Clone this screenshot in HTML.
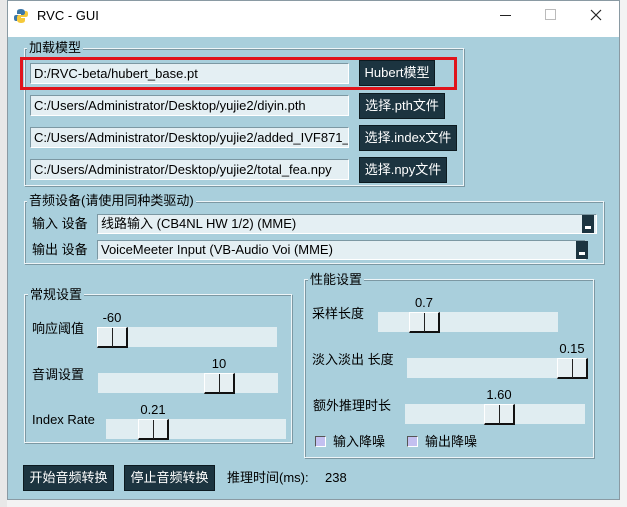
<!DOCTYPE html>
<html><head><meta charset="utf-8"><style>
*{margin:0;padding:0;box-sizing:border-box}
body{width:627px;height:507px;background:#f3f3f3;position:relative;overflow:hidden;font-family:"Liberation Sans","Noto Sans CJK SC",sans-serif;font-size:13px;line-height:16px;color:#000}
.a{position:absolute}
.win{left:7px;top:0;width:613px;height:500px;background:#a9cfdc;border:1px solid #8a9aa3}
.title{left:8px;top:1px;width:611px;height:36px;background:#fff}
.frame{border:1px solid #eef5f8;box-shadow:inset 1px 1px 0 #7c98a3,1px 1px 0 #7c98a3}
.lbl{background:#a9cfdc;padding:0 2px;line-height:14px;font-size:13px}
.entry{background:#e4eff3;border-top:1px solid #7c98a3;border-left:1px solid #7c98a3;border-bottom:1px solid #fff;border-right:1px solid #fff;padding-left:3px;line-height:19px;font-size:13px;white-space:nowrap;overflow:hidden}
.btn{background:#1c3440;color:#fff;border:1px solid #0c1a20;line-height:24px;text-align:center;font-size:13px;white-space:nowrap}
.tr{background:#e0edf1}
.h{width:31px;height:21px;background:#e6eff2;border-right:2px solid #111;border-bottom:2px solid #111;border-top:1px solid #fff;border-left:1px solid #fff}
.h:after{content:"";position:absolute;left:14px;top:0;width:1px;height:19px;background:#222}
.val{font-size:13px;text-align:center;width:40px;margin-left:-20px}
.cb{width:11px;height:11px;background:#c3c0f0;border:1px solid #555;border-right-color:#fff;border-bottom-color:#fff}
.dd{width:12px;height:18px;background:#1c3440}
.dd:after{content:"";position:absolute;left:3px;top:11px;width:6px;height:3px;background:#fff}
</style></head><body>
<div class="a" style="left:0;top:0;width:7px;height:507px;background:#e8e8e8"></div>
<div class="a win"></div>
<div class="a title"></div>
<svg class="a" style="left:13px;top:8px" width="16" height="16" viewBox="0 0 16 16"><path d="M8 1C4 1 4 3 4 4v2h4v1H3C1 7 1 9 1 10s0 3 2 3h1v-2c0-1 1-2 2-2h4c1 0 2-1 2-2V4c0-1-1-3-4-3z" fill="#3b77a8"/><path d="M8 15c4 0 4-2 4-3v-2H8V9h5c2 0 2-2 2-3s0-3-2-3h-1v2c0 1-1 2-2 2H6c-1 0-2 1-2 2v3c0 1 1 3 4 3z" fill="#f5c93a"/></svg>
<div class="a" style="left:37px;top:8px;font-size:13px">RVC - GUI</div>
<div class="a" style="left:500px;top:15px;width:11px;height:1px;background:#222"></div>
<div class="a" style="left:545px;top:9px;width:11px;height:11px;border:1px solid #bbb"></div>
<svg class="a" style="left:590px;top:9px" width="12" height="12"><path d="M1 1L11 11M11 1L1 11" stroke="#222" stroke-width="1.2"/></svg>

<div class="a frame" style="left:24px;top:48px;width:440px;height:138px"></div>
<div class="a lbl" style="left:27px;top:41px">加载模型</div>
<div class="a entry" style="left:30px;top:63px;width:319px;height:21px">D:/RVC-beta/hubert_base.pt</div>
<div class="a btn" style="left:359px;top:60px;width:76px;height:26px">Hubert模型</div>
<div class="a" style="left:20px;top:57px;width:437px;height:33px;border:3px solid #e0141b"></div>
<div class="a entry" style="left:30px;top:95px;width:319px;height:21px">C:/Users/Administrator/Desktop/yujie2/diyin.pth</div>
<div class="a btn" style="left:359px;top:93px;width:86px;height:26px">选择.pth文件</div>
<div class="a entry" style="left:30px;top:127px;width:319px;height:21px">C:/Users/Administrator/Desktop/yujie2/added_IVF871_</div>
<div class="a btn" style="left:359px;top:125px;width:98px;height:26px">选择.index文件</div>
<div class="a entry" style="left:30px;top:159px;width:319px;height:21px">C:/Users/Administrator/Desktop/yujie2/total_fea.npy</div>
<div class="a btn" style="left:359px;top:157px;width:88px;height:26px">选择.npy文件</div>

<div class="a frame" style="left:24px;top:201px;width:580px;height:63px"></div>
<div class="a lbl" style="left:27px;top:194px">音频设备(请使用同种类驱动)</div>
<div class="a" style="left:32px;top:216px">输入 设备</div>
<div class="a entry" style="left:97px;top:214px;width:500px;height:20px;line-height:18px">线路输入 (CB4NL HW 1/2) (MME)</div>
<div class="a dd" style="left:582px;top:215px"></div>
<div class="a" style="left:32px;top:242px">输出 设备</div>
<div class="a entry" style="left:97px;top:240px;width:489px;height:20px;line-height:18px">VoiceMeeter Input (VB-Audio Voi (MME)</div>
<div class="a dd" style="left:576px;top:241px"></div>

<div class="a frame" style="left:24px;top:294px;width:268px;height:149px"></div>
<div class="a lbl" style="left:28px;top:288px">常规设置</div>
<div class="a" style="left:32px;top:321px">响应阈值</div>
<div class="a tr" style="left:98px;top:327px;width:179px;height:20px"></div>
<div class="a val" style="left:112px;top:310px">-60</div>
<div class="a h" style="left:97px;top:327px"></div>
<div class="a" style="left:32px;top:367px">音调设置</div>
<div class="a tr" style="left:98px;top:373px;width:180px;height:20px"></div>
<div class="a val" style="left:219px;top:356px">10</div>
<div class="a h" style="left:204px;top:373px"></div>
<div class="a" style="left:32px;top:412px">Index Rate</div>
<div class="a tr" style="left:106px;top:419px;width:180px;height:20px"></div>
<div class="a val" style="left:153px;top:402px">0.21</div>
<div class="a h" style="left:138px;top:419px"></div>

<div class="a frame" style="left:304px;top:279px;width:290px;height:179px"></div>
<div class="a lbl" style="left:308px;top:273px">性能设置</div>
<div class="a" style="left:312px;top:306px">采样长度</div>
<div class="a tr" style="left:378px;top:312px;width:180px;height:20px"></div>
<div class="a val" style="left:424px;top:295px">0.7</div>
<div class="a h" style="left:409px;top:312px"></div>
<div class="a" style="left:312px;top:352px">淡入淡出 长度</div>
<div class="a tr" style="left:407px;top:358px;width:180px;height:20px"></div>
<div class="a val" style="left:572px;top:341px">0.15</div>
<div class="a h" style="left:557px;top:358px"></div>
<div class="a" style="left:313px;top:398px">额外推理时长</div>
<div class="a tr" style="left:405px;top:404px;width:180px;height:20px"></div>
<div class="a val" style="left:499px;top:387px">1.60</div>
<div class="a h" style="left:484px;top:404px"></div>
<div class="a cb" style="left:315px;top:436px"></div>
<div class="a" style="left:333px;top:434px">输入降噪</div>
<div class="a cb" style="left:407px;top:436px"></div>
<div class="a" style="left:425px;top:434px">输出降噪</div>

<div class="a btn" style="left:23px;top:465px;width:91px;height:26px">开始音频转换</div>
<div class="a btn" style="left:124px;top:465px;width:91px;height:26px">停止音频转换</div>
<div class="a" style="left:227px;top:470px">推理时间(ms):</div>
<div class="a" style="left:325px;top:470px">238</div>
</body></html>
